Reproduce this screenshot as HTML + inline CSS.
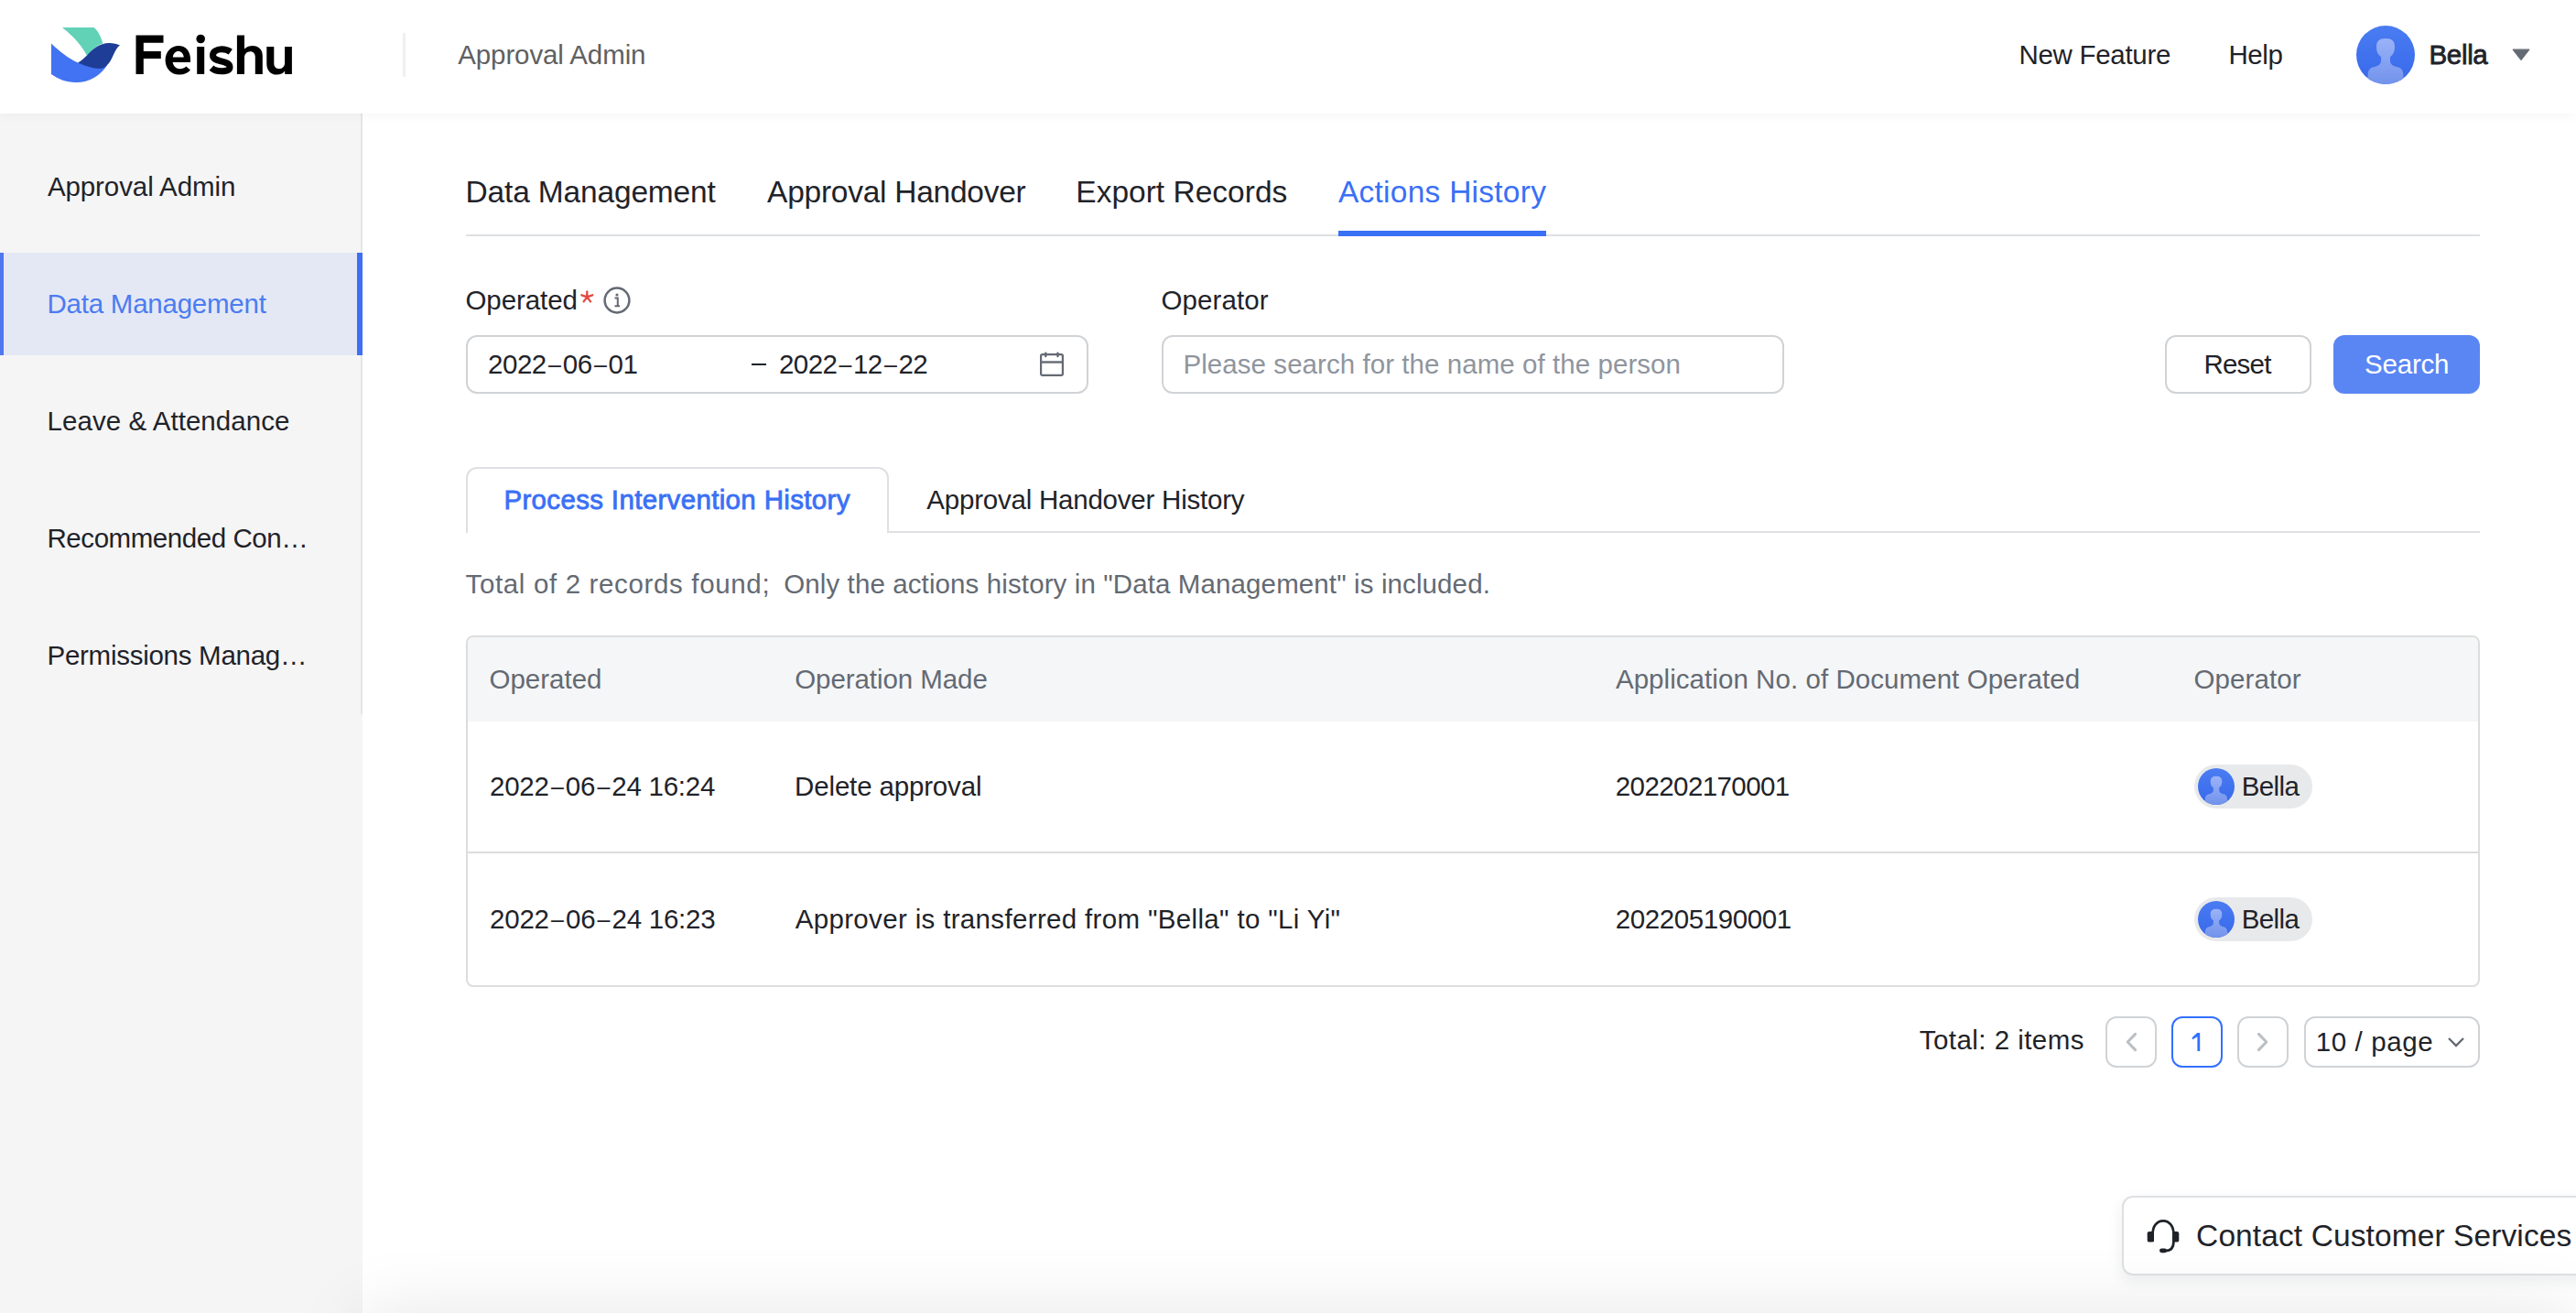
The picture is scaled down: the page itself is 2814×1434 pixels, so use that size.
<!DOCTYPE html>
<html><head><meta charset="utf-8"><title>Feishu Approval Admin</title>
<style>
html,body{margin:0;padding:0;width:2814px;height:1434px;overflow:hidden;background:#fff;font-family:"Liberation Sans",sans-serif;}
.a{position:absolute;box-sizing:border-box;}
.t{position:absolute;white-space:pre;line-height:1;}
.dd{font-size:0.847em;margin:0 0.092em;position:relative;top:-0.04em}
</style></head><body>
<div class="a" style="left:0;top:124px;width:396px;height:1310px;background:#f5f5f5;"></div>
<div class="a" style="left:394px;top:124px;width:2px;height:656px;background:#e6e6e6;"></div>
<div class="a" style="left:0;top:276px;width:396px;height:112px;background:#e4e8f5;"></div>
<div class="a" style="left:0;top:276px;width:4px;height:112px;background:#4f78ee;"></div>
<div class="a" style="left:390px;top:276px;width:6px;height:112px;background:#3f70f4;"></div>
<div class="a" style="left:396px;top:1434px;width:2418px;height:100px;background:#fff;box-shadow:0 0 80px rgba(0,0,0,0.10);z-index:1;"></div>
<div class="a" style="left:0;top:0;width:2814px;height:124px;background:#fff;box-shadow:0 3px 10px rgba(0,0,0,0.035);z-index:2;"></div>
<div style="position:absolute;left:0;top:0;width:2814px;height:124px;z-index:3;">
<svg class="a" style="left:56px;top:30px" width="76" height="61" viewBox="0 0 76 61">
<path d="M11.9 0 H46.5 C50 2 54 9 56.4 17.4 C50 19 44 25 39.3 31.3 C34 21 25 10 11.9 0 Z" fill="#62d2b7"/>
<path d="M0 17.4 C9 26 19 34 29.2 38.5 L39 37 L59 37 L61 41.2 C54 52 42 60 27 60 C16 60 7 56 0 51 Z" fill="#4173f2"/>
<path d="M29.2 38.5 C33 36.5 36 33 39.3 30.2 C45 24 53 17 63.3 17.1 C68 17.1 72 18 75 19.5 C71 22 69 28 65.5 35 C63 40 58 45 52.6 45 C46 45 37 42 29.2 38.5 Z" fill="#1d3d97"/>
</svg>
<svg class="a" style="left:140px;top:30px" width="190" height="60" viewBox="140 30 190 60">
<g fill="#000">
<path d="M148.5 38.5 H178.5 V46.8 H156.8 V56 H175.8 V63.9 H156.8 V80.9 H148.5 Z"/>
<path fill-rule="evenodd" d="M208 68 H188.6 C189.5 72.5 192.5 75.2 196.5 75.2 C199 75.2 201.5 74.2 203.3 72.4 L208 76.6 C205 79.8 201 81.6 196 81.6 C187 81.6 180.6 75 180.6 65.8 C180.6 56.5 187 50 195 50 C203 50 208 56 208 64.5 Z M188.8 62.5 H200.8 C200.3 58.5 198 56 194.8 56 C191.5 56 189.3 58.5 188.8 62.5 Z"/>
<rect x="215.2" y="51" width="8" height="29.9"/><circle cx="219.2" cy="42.5" r="4.8"/>
<path d="M258.9 38.5 H267 V53.5 C269 51 273 50 276 50 C282.5 50 286.8 54 286.8 61 V80.9 H278.8 V62 C278.8 58.5 276.5 56.2 273.5 56.2 C269.5 56.2 267 59 267 63 V80.9 H258.9 Z"/>
<path d="M291.3 51 H299.3 V69 C299.3 73 301.5 75.1 305 75.1 C308.5 75.1 311.1 72.5 311.1 68.5 V51 H318.9 V80.9 H311.2 V77.5 C309.5 80 306 81.6 302.5 81.6 C295.5 81.6 291.3 77 291.3 69.5 Z"/>
</g>
<path d="M251.8 56.6 C249 54.5 245.5 53.7 242 53.7 C236.5 53.7 232.5 56.5 232.5 60.3 C232.5 64.5 236.5 65.5 241.5 66.8 C247 68.2 251 69.5 251 73.2 C251 76.5 247.5 77.8 242 77.8 C237.5 77.8 233.5 76.5 231 74.2" fill="none" stroke="#000" stroke-width="7"/>
</svg>
<div class="t" style="left:500.2px;top:45.0px;font-size:29.5px;letter-spacing:-0.10px;color:#606060;">Approval Admin</div>
<div class="t" style="left:2205.5px;top:45.0px;font-size:29.5px;letter-spacing:-0.30px;color:#1f2329;">New Feature</div>
<div class="t" style="left:2434.5px;top:45.0px;font-size:29.5px;letter-spacing:-0.45px;color:#1f2329;">Help</div>
<div class="t" style="left:2653.5px;top:45.0px;font-size:29.5px;letter-spacing:-0.33px;color:#1f2329;-webkit-text-stroke:0.8px #1f2329;">Bella</div>
<div class="a" style="left:440px;top:36px;width:3px;height:48px;background:#eff0f1;"></div>
<svg class="a" style="left:2574px;top:28px" width="64" height="64" viewBox="0 0 64 64">
<defs><linearGradient id="ag" x1="0" y1="0" x2="0" y2="1"><stop offset="0" stop-color="#4a7cf2"/><stop offset="1" stop-color="#3868ea"/></linearGradient>
<clipPath id="ac"><circle cx="32" cy="32" r="32"/></clipPath></defs>
<circle cx="32" cy="32" r="32" fill="url(#ag)"/>
<linearGradient id="sg" x1="0" y1="0" x2="0" y2="1"><stop offset="0" stop-color="#9ab2f8"/><stop offset="1" stop-color="#6d8fea"/></linearGradient><g clip-path="url(#ac)" fill="url(#sg)">
<path d="M32 14 C39 14 42 17 42 23 C42 29 40 32 37 34 L37 38 C37 42 40 44 44 45 L43 45 C48 45 51.4 48 51.4 54 L51.4 70 L12.6 70 L12.6 54 C12.6 48 16 45 21 45 L20 45 C24 44 27 42 27 38 L27 34 C24 32 22 29 22 23 C22 17 25 14 32 14 Z"/>
</g></svg>
<svg class="a" style="left:2744px;top:53px" width="20" height="14" viewBox="0 0 20 14"><path d="M1.2 1.2 H18.8 L10 12.4 Z" fill="#646a73" stroke="#646a73" stroke-width="1.2" stroke-linejoin="round"/></svg>
</div>
<div class="t" style="left:51.9px;top:189.0px;font-size:29.5px;letter-spacing:-0.09px;color:#1f2329;">Approval Admin</div>
<div class="t" style="left:51.5px;top:317.0px;font-size:29.5px;letter-spacing:-0.24px;color:#4c7cf0;">Data Management</div>
<div class="t" style="left:51.6px;top:445.0px;font-size:29.5px;letter-spacing:0.04px;color:#1f2329;">Leave &amp; Attendance</div>
<div class="t" style="left:51.5px;top:573.0px;font-size:29.5px;letter-spacing:-0.44px;color:#1f2329;">Recommended Con…</div>
<div class="t" style="left:51.5px;top:701.0px;font-size:29.5px;letter-spacing:-0.27px;color:#1f2329;">Permissions Manag…</div>
<div class="t" style="left:508.5px;top:193.0px;font-size:33.5px;letter-spacing:-0.16px;color:#1f2329;">Data Management</div>
<div class="t" style="left:838.1px;top:193.0px;font-size:33.5px;letter-spacing:-0.26px;color:#1f2329;">Approval Handover</div>
<div class="t" style="left:1175.3px;top:193.0px;font-size:33.5px;letter-spacing:0.01px;color:#1f2329;">Export Records</div>
<div class="t" style="left:1461.9px;top:193.0px;font-size:33.5px;letter-spacing:0.26px;color:#3a70f5;">Actions History</div>
<div class="a" style="left:509px;top:256px;width:2200px;height:2px;background:#dee0e3;"></div>
<div class="a" style="left:1462px;top:252px;width:227px;height:6px;background:#3a70f5;"></div>
<div class="t" style="left:508.5px;top:313.0px;font-size:29.5px;letter-spacing:-0.08px;color:#1f2329;">Operated</div>
<svg class="a" style="left:633px;top:316px" width="16" height="16" viewBox="0 0 16 16"><path d="M8.3 8.4 V2.4 M8.3 8.4 L2.4 6.3 M8.3 8.4 L14.2 6.3 M8.3 8.4 L4.6 13.4 M8.3 8.4 L12.1 13.4" stroke="#e34a40" stroke-width="2.3" stroke-linecap="round" fill="none"/></svg>
<svg class="a" style="left:659px;top:313px" width="30" height="30" viewBox="0 0 30 30"><circle cx="15" cy="15" r="13.4" fill="none" stroke="#646a73" stroke-width="2.5"/><circle cx="15" cy="9" r="1.6" fill="#646a73"/><path d="M12.5 12.5 H15.8 V21 M12.5 21.2 H18" stroke="#646a73" stroke-width="2" fill="none"/></svg>
<div class="t" style="left:1268.5px;top:313.0px;font-size:29.5px;letter-spacing:0.08px;color:#1f2329;">Operator</div>
<div class="a" style="left:509px;top:366px;width:680px;height:64px;border:2px solid #d0d3d6;border-radius:12px;"></div>
<div class="t" style="left:533.1px;top:383.0px;font-size:29.5px;letter-spacing:-0.49px;color:#1f2329;">2022<span class="dd">–</span>06<span class="dd">–</span>01</div>
<div class="t" style="left:851.1px;top:383.0px;font-size:29.5px;letter-spacing:-0.63px;color:#1f2329;">2022<span class="dd">–</span>12<span class="dd">–</span>22</div>
<div class="a" style="left:821px;top:397.1px;width:15.8px;height:1.8px;background:#1f2329;"></div>
<svg class="a" style="left:1135px;top:384px" width="28" height="28" viewBox="0 0 28 28"><rect x="2.1" y="3.1" width="23.8" height="22.8" rx="1.6" fill="none" stroke="#646a73" stroke-width="2.2"/><path d="M2 11.5 H26" stroke="#646a73" stroke-width="2.4" fill="none"/><path d="M7.3 1.6 V5 M20.5 1.6 V5" stroke="#646a73" stroke-width="2.4" stroke-linecap="round" fill="none"/></svg>
<div class="a" style="left:1269px;top:366px;width:680px;height:64px;border:2px solid #d0d3d6;border-radius:12px;"></div>
<div class="t" style="left:1292.5px;top:383.0px;font-size:29.5px;letter-spacing:0.06px;color:#8f959e;">Please search for the name of the person</div>
<div class="a" style="left:2365px;top:366px;width:160px;height:64px;border:2px solid #d0d3d6;border-radius:12px;"></div>
<div class="t" style="left:2407.5px;top:383.0px;font-size:29.5px;letter-spacing:-0.81px;color:#1f2329;">Reset</div>
<div class="a" style="left:2549px;top:366px;width:160px;height:64px;background:#5a86f4;border-radius:12px;"></div>
<div class="t" style="left:2583.1px;top:383.0px;font-size:29.5px;letter-spacing:-0.21px;color:#fff;">Search</div>
<div class="a" style="left:509px;top:580px;width:2200px;height:2px;background:#dee0e3;"></div>
<div class="a" style="left:509px;top:510px;width:462px;height:72px;border:2px solid #dee0e3;border-bottom:none;border-radius:12px 12px 0 0;background:#fff;"></div>
<div class="t" style="left:550.4px;top:531.0px;font-size:29.5px;letter-spacing:0.34px;color:#3a70f5;-webkit-text-stroke:0.8px #3a70f5;">Process Intervention History</div>
<div class="t" style="left:1012.3px;top:531.0px;font-size:29.5px;letter-spacing:-0.22px;color:#1f2329;">Approval Handover History</div>
<div class="t" style="left:508.5px;top:623.0px;font-size:29.5px;letter-spacing:0.65px;color:#646a73;">Total of 2 records found;</div>
<div class="t" style="left:856.2px;top:623.0px;font-size:29.5px;letter-spacing:0.11px;color:#646a73;">Only the actions history in &quot;Data Management&quot; is included.</div>
<div class="a" style="left:509px;top:694px;width:2200px;height:384px;border:2px solid #dcdddd;border-radius:8px;overflow:hidden;"><div style="position:absolute;left:0;top:0;right:0;height:92px;background:#f5f6f7;"></div><div style="position:absolute;left:0;top:234px;right:0;height:2px;background:#dcdddd;"></div></div>
<div class="t" style="left:534.5px;top:727.0px;font-size:29.5px;letter-spacing:-0.01px;color:#646a73;">Operated</div>
<div class="t" style="left:868.2px;top:727.0px;font-size:29.5px;letter-spacing:-0.07px;color:#646a73;">Operation Made</div>
<div class="t" style="left:1764.9px;top:727.0px;font-size:29.5px;letter-spacing:0.06px;color:#646a73;">Application No. of Document Operated</div>
<div class="t" style="left:2396.4px;top:727.0px;font-size:29.5px;letter-spacing:0.11px;color:#646a73;">Operator</div>
<div class="t" style="left:535.1px;top:844.0px;font-size:29.5px;letter-spacing:-0.27px;color:#1f2329;">2022<span class="dd">–</span>06<span class="dd">–</span>24 16:24</div>
<div class="t" style="left:868.1px;top:844.0px;font-size:29.5px;letter-spacing:-0.16px;color:#1f2329;">Delete approval</div>
<div class="t" style="left:1764.8px;top:844.0px;font-size:29.5px;letter-spacing:-0.59px;color:#1f2329;">202202170001</div>
<div class="t" style="left:535.1px;top:989.0px;font-size:29.5px;letter-spacing:-0.25px;color:#1f2329;">2022<span class="dd">–</span>06<span class="dd">–</span>24 16:23</div>
<div class="t" style="left:868.7px;top:989.0px;font-size:29.5px;letter-spacing:0.34px;color:#1f2329;">Approver is transferred from &quot;Bella&quot; to &quot;Li Yi&quot;</div>
<div class="t" style="left:1764.8px;top:989.0px;font-size:29.5px;letter-spacing:-0.41px;color:#1f2329;">202205190001</div>
<div class="a" style="left:2397px;top:835px;width:129px;height:48px;border-radius:24px;background:#e8e9ea;"></div>
<svg class="a" style="left:2401px;top:839px" width="40" height="40" viewBox="0 0 64 64">
<defs><clipPath id="cc835"><circle cx="32" cy="32" r="32"/></clipPath></defs><circle cx="32" cy="32" r="32" fill="url(#ag)"/>
<g fill="url(#sg)" clip-path="url(#cc835)"><path d="M32 14 C39 14 42 17 42 23 C42 29 40 32 37 34 L37 38 C37 42 40 44 44 45 L43 45 C48 45 51.4 48 51.4 54 L51.4 70 L12.6 70 L12.6 54 C12.6 48 16 45 21 45 L20 45 C24 44 27 42 27 38 L27 34 C24 32 22 29 22 23 C22 17 25 14 32 14 Z"/></g></svg>
<div class="t" style="left:2448.7px;top:844.0px;font-size:29.5px;letter-spacing:-0.58px;color:#1f2329;">Bella</div>
<div class="a" style="left:2397px;top:980px;width:129px;height:48px;border-radius:24px;background:#e8e9ea;"></div>
<svg class="a" style="left:2401px;top:984px" width="40" height="40" viewBox="0 0 64 64">
<defs><clipPath id="cc980"><circle cx="32" cy="32" r="32"/></clipPath></defs><circle cx="32" cy="32" r="32" fill="url(#ag)"/>
<g fill="url(#sg)" clip-path="url(#cc980)"><path d="M32 14 C39 14 42 17 42 23 C42 29 40 32 37 34 L37 38 C37 42 40 44 44 45 L43 45 C48 45 51.4 48 51.4 54 L51.4 70 L12.6 70 L12.6 54 C12.6 48 16 45 21 45 L20 45 C24 44 27 42 27 38 L27 34 C24 32 22 29 22 23 C22 17 25 14 32 14 Z"/></g></svg>
<div class="t" style="left:2448.7px;top:989.0px;font-size:29.5px;letter-spacing:-0.58px;color:#1f2329;">Bella</div>
<div class="t" style="left:2096.8px;top:1121.0px;font-size:29.5px;letter-spacing:0.45px;color:#1f2329;">Total: 2 items</div>
<div class="a" style="left:2300px;top:1110px;width:56px;height:56px;border:2px solid #d0d3d6;border-radius:12px;"></div>
<div class="a" style="left:2372px;top:1110px;width:56px;height:56px;border:2px solid #3370ff;border-radius:12px;"></div>
<div class="a" style="left:2444px;top:1110px;width:56px;height:56px;border:2px solid #d0d3d6;border-radius:12px;"></div>
<svg class="a" style="left:2320px;top:1127px" width="16" height="22" viewBox="0 0 16 22"><path d="M12.6 2.4 L4.2 11 L12.6 19.6" fill="none" stroke="#bbbfc4" stroke-width="3" stroke-linecap="round" stroke-linejoin="round"/></svg>
<svg class="a" style="left:2464px;top:1127px" width="16" height="22" viewBox="0 0 16 22"><path d="M3.4 2.4 L11.8 11 L3.4 19.6" fill="none" stroke="#bbbfc4" stroke-width="3" stroke-linecap="round" stroke-linejoin="round"/></svg>
<svg class="a" style="left:2390px;top:1124px" width="20" height="28" viewBox="0 0 20 28"><path d="M10.2 4 H13.2 V24 H10.4 V8.3 L4.8 11.6 V9.1 Z" fill="#3370ff"/></svg>
<div class="a" style="left:2517px;top:1110px;width:192px;height:56px;border:2px solid #d0d3d6;border-radius:12px;"></div>
<div class="t" style="left:2529.8px;top:1123.0px;font-size:29.5px;letter-spacing:0.60px;color:#1f2329;">10 / page</div>
<svg class="a" style="left:2673px;top:1132px" width="20" height="12" viewBox="0 0 20 12"><path d="M2 2 L10 10 L18 2" fill="none" stroke="#646a73" stroke-width="2.4"/></svg>
<div class="a" style="left:2318px;top:1306px;width:520px;height:87px;border:2px solid #dee0e3;border-radius:12px;background:#fff;box-shadow:0 6px 16px rgba(31,35,41,0.08);"></div>
<svg class="a" style="left:2344px;top:1331px" width="38" height="38" viewBox="0 0 38 38">
<path d="M7.6 25 V16.5 C7.6 8 12.5 2.3 19 2.3 C25.5 2.3 30.4 8 30.4 16.5 V25 C30.4 31.5 27 35.2 21 35.2" fill="none" stroke="#1f2329" stroke-width="2.7"/>
<rect x="1.7" y="14" width="7.3" height="11.6" rx="2.2" fill="#1f2329"/><rect x="29" y="14" width="7.3" height="11.6" rx="2.2" fill="#1f2329"/>
<rect x="15" y="32.4" width="8" height="4.8" rx="2.4" fill="#1f2329"/>
</svg>
<div class="t" style="left:2399.1px;top:1333.0px;font-size:33.5px;letter-spacing:0.10px;color:#1f2329;">Contact Customer Services</div>
</body></html>
